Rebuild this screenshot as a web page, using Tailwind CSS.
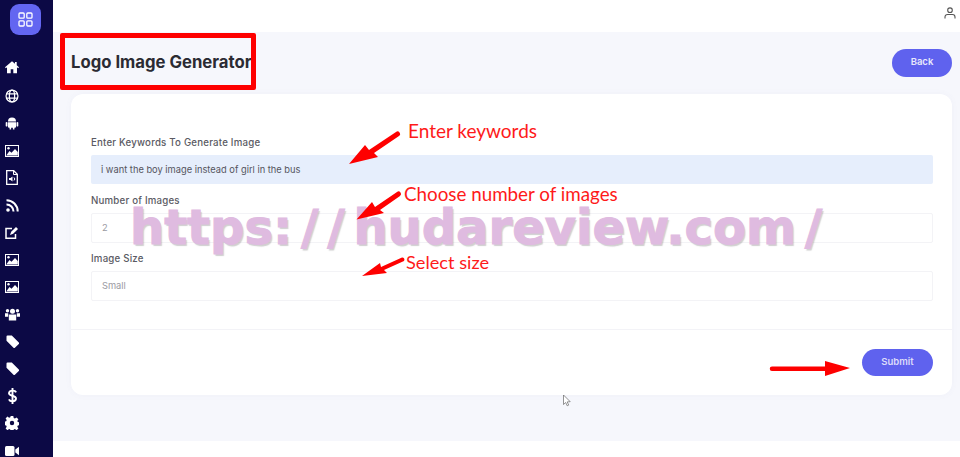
<!DOCTYPE html>
<html>
<head>
<meta charset="utf-8">
<script src="https://cdn.jsdelivr.net/npm/@tailwindcss/browser@4"></script>
</head>
<body class="m-0 overflow-hidden bg-white font-['Inter','Liberation_Sans',sans-serif]">
<div class="relative flex h-[457px] w-[960px] overflow-hidden">
  <aside class="flex h-full w-[53px] shrink-0 flex-col overflow-hidden bg-[#0c0945] text-white">
    <div class="ml-[9.500px] mt-[4px] flex h-[31px] w-[31px] shrink-0 items-center justify-center rounded-[9px] bg-[#6366f1]">
      <svg class="h-[15px] w-[15px]" viewBox="0 0 15 15" fill="none" stroke="#fff" stroke-width="1.3"><rect x="1" y="1" width="5.2" height="5.2" rx="1"/><rect x="8.8" y="1" width="5.2" height="5.2" rx="1"/><rect x="1" y="8.8" width="5.2" height="5.2" rx="1"/><rect x="8.8" y="8.8" width="5.2" height="5.2" rx="1"/></svg>
    </div>
    <nav class="mt-[18.400px] flex w-[24px] shrink-0 flex-col items-center">
      <span class="flex h-[27.300px] items-center"><svg class="h-[14px] w-[14px]" viewBox="0 0 16 16" fill="#fff"><path d="M8 1.500 0 8.300l1 1.100 1.300-1V15h4.200v-4.300h3V15h4.200V8.400l1.300 1 1-1.100-2.600-2.200V2.200h-2v2.200z"/></svg></span>
      <span class="mt-[1.600px] flex h-[27.300px] items-center"><svg class="h-[14px] w-[14px]" viewBox="0 0 16 16" fill="none" stroke="#fff" stroke-width="1.4"><circle cx="8" cy="8" r="6.8"/><ellipse cx="8" cy="8" rx="3" ry="6.8"/><path d="M1.500 5.600h13M1.500 10.400h13"/></svg></span>
      <span class="flex h-[27.300px] items-center"><svg class="h-[14px] w-[14px]" viewBox="0 0 16 16" fill="#fff"><path d="M3.400 6.400a4.600 4.600 0 0 1 9.200 0zM3.400 7.200h9.200v5a1.200 1.200 0 0 1-1.200 1.200h-.6V15.500H9V13.400H7V15.500H5.200V13.400h-.6a1.200 1.200 0 0 1-1.200-1.200zM.8 7.400a1.100 1.100 0 0 1 2 0v4a1.100 1.100 0 0 1-2 0zM13.200 7.400a1.100 1.100 0 0 1 2 0v4a1.100 1.100 0 0 1-2 0z"/></svg></span>
      <span class="flex h-[27.300px] items-center"><svg class="h-[12px] w-[14px]" viewBox="0 0 14 12"><rect x=".5" y=".5" width="13" height="11" fill="#0c0945" stroke="#fff"/><path d="M1.200 10.500 4.500 6l2 1.800L10 4l2.800 3v3.500z" fill="#fff"/><circle cx="3.500" cy="3.300" r="1.200" fill="#fff"/></svg></span>
      <span class="flex h-[27.300px] items-center"><svg class="h-[15px] w-[12px]" viewBox="0 0 12 15" fill="none" stroke="#fff" stroke-width="1.300"><path d="M.7.700h7l3.600 3.600v10H.7z"/><path d="M7.500.700v3.800h3.800" stroke-width="1"/><path d="M3 8h1.500L6.500 6.500v5L4.500 10H3z" fill="#fff" stroke="none"/><path d="M8 7.500a2 2 0 0 1 0 3" stroke-width="1"/></svg></span>
      <span class="flex h-[27.300px] items-center"><svg class="h-[13px] w-[13px]" viewBox="0 0 13 13" fill="none" stroke="#fff" stroke-width="2"><circle cx="2" cy="11" r="1.800" fill="#fff" stroke="none"/><path d="M.5 5.500a7 7 0 0 1 7 7"/><path d="M.5 1.300a11.200 11.200 0 0 1 11.200 11.200"/></svg></span>
      <span class="flex h-[27.300px] items-center"><svg class="h-[13px] w-[14px]" viewBox="0 0 14 13" fill="none" stroke="#fff" stroke-width="1.500"><path d="M7 2.500H1v9.700h9.500V8"/><path d="M5 9l1.200-3.200L11 1l2 2-4.800 4.800z" fill="#fff" stroke="none"/></svg></span>
      <span class="flex h-[27.300px] items-center"><svg class="h-[12px] w-[14px]" viewBox="0 0 14 12"><rect x=".5" y=".5" width="13" height="11" fill="#0c0945" stroke="#fff"/><path d="M1.200 10.500 4.500 6l2 1.800L10 4l2.800 3v3.500z" fill="#fff"/><circle cx="3.500" cy="3.300" r="1.200" fill="#fff"/></svg></span>
      <span class="flex h-[27.300px] items-center"><svg class="h-[12px] w-[14px]" viewBox="0 0 14 12"><rect x=".5" y=".5" width="13" height="11" fill="#0c0945" stroke="#fff"/><path d="M1.200 10.500 4.500 6l2 1.800L10 4l2.800 3v3.500z" fill="#fff"/><circle cx="3.500" cy="3.300" r="1.200" fill="#fff"/></svg></span>
      <span class="flex h-[27.300px] items-center"><svg class="h-[13px] w-[15px]" viewBox="0 0 15 13" fill="#fff"><circle cx="7.500" cy="3.200" r="2.500"/><circle cx="2.500" cy="2.800" r="1.700"/><circle cx="12.500" cy="2.800" r="1.700"/><path d="M3.800 6.500h7.400v6H3.800z"/><path d="M0 5.300h3.200v3.500H0zM11.800 5.300H15v3.500h-3.200z"/></svg></span>
      <span class="flex h-[27.300px] items-center"><svg class="h-[13px] w-[13px]" viewBox="0 0 13 13" fill="#fff"><path d="M.5 1.500A1 1 0 0 1 1.500.5h4.300l7 7a1 1 0 0 1 0 1.400l-3.900 3.900a1 1 0 0 1-1.400 0l-7-7z"/></svg></span>
      <span class="flex h-[27.300px] items-center"><svg class="h-[13px] w-[13px]" viewBox="0 0 13 13" fill="#fff"><path d="M.5 1.500A1 1 0 0 1 1.500.5h4.300l7 7a1 1 0 0 1 0 1.400l-3.900 3.900a1 1 0 0 1-1.400 0l-7-7z"/></svg></span>
      <span class="flex h-[27.300px] items-center"><svg class="h-[16px] w-[9px]" viewBox="0 0 9 16" fill="none" stroke="#fff" stroke-width="1.900"><path d="M8 4.300C7.500 3 6 2.600 4.500 2.600 2.500 2.600 1 3.600 1 5.200 1 8.500 8 7 8 10.600c0 1.700-1.600 2.700-3.500 2.700-1.600 0-3-.6-3.600-2"/><path d="M4.500 0v16"/></svg></span>
      <span class="flex h-[27.300px] items-center"><svg class="h-[14px] w-[14px]" viewBox="0 0 14 14" fill="#fff"><path fill-rule="evenodd" d="M5.700 0h2.600l.4 2 1.200.5 1.700-1.100 1.800 1.800-1.100 1.700.5 1.200 2 .4v2.600l-2 .4-.5 1.200 1.100 1.700-1.800 1.800-1.700-1.100-1.200.5-.4 2H5.700l-.4-2-1.200-.5-1.700 1.100-1.800-1.800 1.100-1.700-.5-1.200-2-.4V5.700l2-.4.5-1.200-1.100-1.700 1.800-1.800 1.700 1.100 1.200-.5zM7 4.800a2.200 2.200 0 1 0 0 4.400 2.200 2.200 0 0 0 0-4.400z"/></svg></span>
      <span class="flex h-[27.300px] items-center"><svg class="h-[10px] w-[14px]" viewBox="0 0 14 10" fill="#fff"><rect x="0" y="0" width="9.500" height="10" rx="1.500"/><path d="M10.300 3.500 14 .8v8.400L10.300 6.500z"/></svg></span>
    </nav>
  </aside>

  <div class="flex min-w-0 flex-1 flex-col">
    <header class="flex h-[32px] shrink-0 items-start justify-end bg-white pr-[4px] pt-[7px]">
      <svg class="h-[12px] w-[12px]" viewBox="0 0 12 12" fill="none" stroke="#555" stroke-width="1.100"><circle cx="6" cy="3.200" r="2.300"/><path d="M1 11.500V10a2.500 2.500 0 0 1 2.500-2.500h5A2.500 2.500 0 0 1 11 10v1.500"/></svg>
    </header>
    <main class="flex h-[409px] shrink-0 flex-col bg-[#f6f7fc] pl-[18px] pr-[8px]">
      <div class="flex h-[62px] shrink-0 items-center justify-between">
        <h1 class="mt-[-2px] text-[16.700px] leading-none font-bold text-[#2b2b33]">Logo Image Generator</h1>
        <button class="mt-[-1px] flex h-[28px] w-[60px] items-center justify-center rounded-full bg-[#5f62ee] text-[9.500px] font-semibold text-[#e8e8fb]">Back</button>
      </div>
      <section class="h-[301px] rounded-[12px] bg-white shadow-[0_0_6px_rgba(120,120,180,0.05)]">
        <div class="flex h-[236px] flex-col border-b border-[#f3f3f7] pl-[20px] pr-[19px] pt-[43px]">
          <label class="mb-[6px] block h-[12px] text-[9.700px] leading-[12px] font-medium tracking-[0.2px] text-[#5a5a63]">Enter Keywords To Generate Image</label>
          <div class="flex h-[29px] items-center rounded-[2px] bg-[#e6eefc] px-[10px] text-[9.300px] text-[#55555e]">i want the boy image instead of girl in the bus</div>
          <label class="mb-[6px] mt-[11px] block h-[12px] text-[9.700px] leading-[12px] font-medium tracking-[0.2px] text-[#5a5a63]">Number of Images</label>
          <div class="flex h-[30px] items-center rounded-[2px] border border-[#f3f3f6] px-[10px] text-[9.300px] text-[#9a9aa2]">2</div>
          <label class="mb-[6px] mt-[10px] block h-[12px] text-[9.700px] leading-[12px] font-medium tracking-[0.2px] text-[#5a5a63]">Image Size</label>
          <div class="flex h-[30px] items-center rounded-[2px] border border-[#f3f3f6] px-[10px] text-[9.300px] text-[#9a9aa2]">Small</div>
        </div>
        <div class="flex justify-end px-[19px] pt-[19px]">
          <button class="flex h-[27px] w-[71px] items-center justify-center rounded-full bg-[#5f62ee] text-[9.500px] font-semibold text-[#dcdcfa]">Submit</button>
        </div>
      </section>
    </main>
    <footer class="h-[16px] bg-white"></footer>
  </div>

  <!-- video annotations laid over the page -->
  <div class="absolute left-[60px] top-[33px] h-[57px] w-[196px] rounded-[2px] border-[5px] border-[#fe0000]"></div>

  <div class="absolute left-[130px] top-[197px] text-[48px] leading-[60px] font-bold whitespace-pre text-[#dfbbe0] [word-spacing:-8px] [-webkit-text-stroke:1px_#dfbbe0] [font-family:'DejaVu_Sans',sans-serif] [text-shadow:1.500px_2px_1px_rgba(120,120,120,0.35)]">https: / / hudareview.com /</div>

  <div class="absolute left-[408px] top-[119px] text-[19px] leading-[24px] whitespace-nowrap text-[#fe1a1a] [font-family:'Lato',sans-serif]">Enter keywords</div>
  <div class="absolute left-[404px] top-[182px] text-[18.800px] leading-[24px] whitespace-nowrap text-[#fe1a1a] [font-family:'Lato',sans-serif]">Choose number of images</div>
  <div class="absolute left-[406px] top-[250px] text-[18.200px] leading-[24px] whitespace-nowrap text-[#fe1a1a] [font-family:'Lato',sans-serif]">Select size</div>

  <svg class="pointer-events-none absolute left-0 top-0 h-[457px] w-[960px]" viewBox="0 0 960 457" fill="#fe0000">
    <path d="M349 164 365 145l4 5 27-18a2.500 2.500 0 0 1 3 4L374 153l4 4z" />
    <path d="M356.500 219.500 372 202l3 5 22-15a2.500 2.500 0 0 1 3 4L380 210l4 3z" />
    <path d="M362 276 380 263l1 4 21-9.500a2.200 2.200 0 0 1 2 3.500L384 270l3 3z" />
    <path d="M772 366.500H825V361l25 7-25 8v-5H772a2.200 2.200 0 0 1 0-4.500z" />
    <path d="M563.500 395v9.500l2.200-2 1.500 3.300 1.500-.7-1.500-3.200 3-.2z" fill="#fff" stroke="#666" stroke-width=".7"/>
  </svg>
</div>
</body>
</html>
